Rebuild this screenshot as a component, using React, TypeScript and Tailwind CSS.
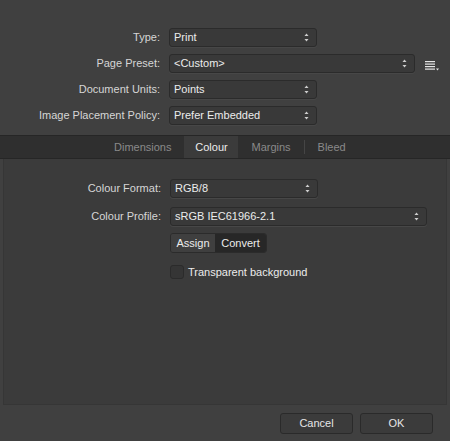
import React from "react";

const font = { fontFamily: '"Liberation Sans", Arial, sans-serif' };

function Stepper() {
  return (
    <svg width="5" height="9" viewBox="0 0 5 9" className="shrink-0">
      <path d="M2.5 0.5 L4.5 3 L0.5 3 Z" fill="#cfcfcf" />
      <path d="M2.5 8.5 L4.5 6 L0.5 6 Z" fill="#cfcfcf" />
    </svg>
  );
}

function Select({ value, wide }: { value: string; wide?: boolean }) {
  return (
    <div
      className={`flex h-[19px] items-center justify-between rounded-[3px] border border-[#2b2b2b] bg-[#393939] pl-[4px] pr-[7px] text-[11px] text-[#ececec] shadow-[0_1px_0_#474747] ${
        wide ? "w-full" : "w-[148px]"
      }`}
    >
      <span>{value}</span>
      <Stepper />
    </div>
  );
}

function Label({ children }: { children: React.ReactNode }) {
  return (
    <div className="flex h-[19px] items-center justify-end text-[11px] text-[#d6d6d6]">
      {children}
    </div>
  );
}

function MenuIcon() {
  return (
    <svg width="15" height="10" viewBox="0 0 15 10">
      <rect x="0" y="0" width="10" height="1.2" fill="#e6e6e6" />
      <rect x="0" y="2.5" width="10" height="1.2" fill="#e6e6e6" />
      <rect x="0" y="5" width="10" height="1.2" fill="#e6e6e6" />
      <rect x="0" y="7.5" width="10" height="1.2" fill="#e6e6e6" />
      <path d="M11 7.5 L14 7.5 L12.5 9.5 Z" fill="#e6e6e6" />
    </svg>
  );
}

export default function App() {
  return (
    <div className="flex h-[441px] w-[450px] flex-col bg-[#404040]" style={font}>
      <div className="grid grid-cols-[160px_1fr] gap-x-[9px] gap-y-[7px] pt-[28px] pb-[10px] pr-[12px]">
        <Label>Type:</Label>
        <Select value="Print" />

        <Label>Page Preset:</Label>
        <div className="flex items-center gap-[10px]">
          <div className="w-[246px]">
            <Select value="<Custom>" wide />
          </div>
          <div className="pt-[4px]">
            <MenuIcon />
          </div>
        </div>

        <Label>Document Units:</Label>
        <Select value="Points" />

        <Label>Image Placement Policy:</Label>
        <Select value="Prefer Embedded" />
      </div>

      <div className="flex h-[24px] items-stretch border-y border-[#262626] bg-[#2f2f2f] text-[11px]">
        <div className="flex items-center pl-[114px] pr-[13px] text-[#8a8a8a]">Dimensions</div>
        <div className="flex w-[54px] items-center justify-center bg-[#3b3b3b] text-[#ececec]">Colour</div>
        <div className="flex items-center px-[13px] text-[#8a8a8a]">Margins</div>
        <div className="my-[4px] w-px bg-[#454545]" />
        <div className="flex flex-1 items-center pl-[13px] text-[#8a8a8a]">Bleed</div>
      </div>

      <div className="mx-[3px] flex h-[246px] flex-col border-x border-b border-[#363636] bg-[#3b3b3b]">
        <div className="grid grid-cols-[157px_1fr] gap-x-[9px] gap-y-[9px] pt-[20px] pr-[19px]">
          <Label>Colour Format:</Label>
          <Select value="RGB/8" />

          <Label>Colour Profile:</Label>
          <Select value="sRGB IEC61966-2.1" wide />

          <div />
          <div className="-mt-[2px] flex h-[20px] w-[97px] overflow-hidden rounded-[3px] border border-[#2b2b2b] text-[11px] text-[#ececec]">
            <div className="flex w-[44px] items-center justify-center bg-[#3f3f3f]">Assign</div>
            <div className="flex flex-1 items-center justify-center bg-[#272727]">Convert</div>
          </div>

          <div />
          <div className="mt-[2px] flex items-center gap-[4px] text-[11px] text-[#ececec]">
            <div className="h-[14px] w-[14px] rounded-[3px] border border-[#2b2b2b] bg-[#353535]" />
            <span>Transparent background</span>
          </div>
        </div>
      </div>

      <div className="flex justify-end gap-[7px] pt-[8px] pr-[17px]">
        <button className="h-[21px] w-[73px] rounded-[3px] border border-[#2a2a2a] bg-[#3b3b3b] text-[11px] text-[#e6e6e6]">
          Cancel
        </button>
        <button className="h-[21px] w-[73px] rounded-[3px] border border-[#2a2a2a] bg-[#3b3b3b] text-[11px] text-[#e6e6e6]">
          OK
        </button>
      </div>
    </div>
  );
}
